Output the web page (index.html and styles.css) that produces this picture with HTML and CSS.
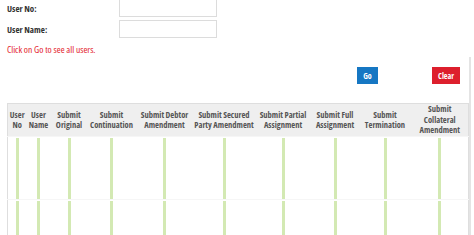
FILE: index.html
```html
<!DOCTYPE html>
<html lang="en">
<head>
  <meta charset="UTF-8">
  <meta name="viewport" content="width=device-width, initial-scale=1.0">
  <title>Users</title>
  <link rel="stylesheet" href="styles.css">
</head>
<body>
  <div class="search">
    <div class="field">
      <label for="userNo">User No:</label>
      <input type="text" id="userNo">
    </div>
    <div class="field">
      <label for="userName">User Name:</label>
      <input type="text" id="userName">
    </div>
    <p class="hint">Click on Go to see all users.</p>
  </div>

  <div class="results">
    <div class="actions">
      <button class="btn btn-go">Go</button>
      <button class="btn btn-clear">Clear</button>
    </div>
    <table class="users">
      <colgroup>
        <col class="c-no">
        <col class="c-name">
        <col class="c-orig">
        <col class="c-cont">
        <col class="c-debtor">
        <col class="c-secured">
        <col class="c-partial">
        <col class="c-full">
        <col class="c-term">
        <col class="c-coll">
      </colgroup>
      <thead>
        <tr>
          <th>User No</th>
          <th>User Name</th>
          <th>Submit Original</th>
          <th>Submit Continuation</th>
          <th>Submit Debtor Amendment</th>
          <th>Submit Secured Party Amendment</th>
          <th>Submit Partial Assignment</th>
          <th>Submit Full Assignment</th>
          <th>Submit Termination</th>
          <th>Submit Collateral Amendment</th>
        </tr>
      </thead>
      <tbody id="rows"></tbody>
    </table>
  </div>

  <script>
    const rows = document.getElementById("rows");
    for (let r = 0; r < 2; r++) {
      const tr = document.createElement("tr");
      for (let c = 0; c < 10; c++) {
        const td = document.createElement("td");
        td.innerHTML = '<span class="bar"></span>';
        tr.appendChild(td);
      }
      rows.appendChild(tr);
    }
  </script>
</body>
</html>
```

FILE: styles.css
```css
body {
  margin: 0;
  font-family: "Open Sans", "Liberation Sans", sans-serif;
  font-stretch: 87%;
  background: #fff;
  color: #333;
}
.search {
  padding-left: 7px;
  margin-top: -1px;
}
.field {
  display: flex;
  align-items: center;
  height: 18px;
  margin-bottom: 3px;
}
.field label {
  width: 112px;
  font-size: 9px;
  font-weight: bold;
  color: #333;
}
.field input {
  box-sizing: border-box;
  width: 98px;
  height: 18px;
  border: 1px solid #dcdcdc;
  margin: 0;
  padding: 0 3px;
}
.hint {
  margin: 6px 0 0;
  font-size: 9.5px;
  line-height: 12px;
  color: #e3202b;
}
.results {
  margin-top: 1px;
  padding: 10px 0 0 7px;
  width: 462px;
  border-right: 2px solid #e4e4e4;
}
.actions {
  display: flex;
  justify-content: flex-end;
  gap: 54px;
  padding-right: 9px;
}
.btn {
  height: 17px;
  border: none;
  padding: 0;
  font-family: "Open Sans", sans-serif;
  font-stretch: 87%;
  font-size: 8px;
  font-weight: bold;
  color: #fff;
  cursor: pointer;
}
.btn-go {
  width: 21px;
  background: #1677c3;
}
.btn-clear {
  width: 28px;
  background: #dd1f2d;
}
.users {
  margin-top: 19px;
  width: 462px;
  table-layout: fixed;
  border-collapse: collapse;
  border: 1px solid #dedede;
}
.c-no { width: 19px; }
.c-name { width: 24px; }
.c-orig { width: 37px; }
.c-cont { width: 48px; }
.c-debtor { width: 58px; }
.c-secured { width: 61px; }
.c-partial { width: 57px; }
.c-full { width: 47px; }
.c-term { width: 53px; }
.c-coll { width: 57px; }
.users th {
  height: 32px;
  padding: 0;
  background: #efefef;
  color: #555;
  font-size: 8.5px;
  font-stretch: 82%;
  line-height: 10.5px;
  font-weight: bold;
  text-align: center;
  vertical-align: middle;
}
.users td {
  height: 62px;
  padding: 0;
  text-align: center;
  border-top: 1px solid #f6f6f6;
}
.bar {
  display: inline-block;
  width: 3px;
  height: 61px;
  background: #d3e9b3;
  vertical-align: top;
}
```
